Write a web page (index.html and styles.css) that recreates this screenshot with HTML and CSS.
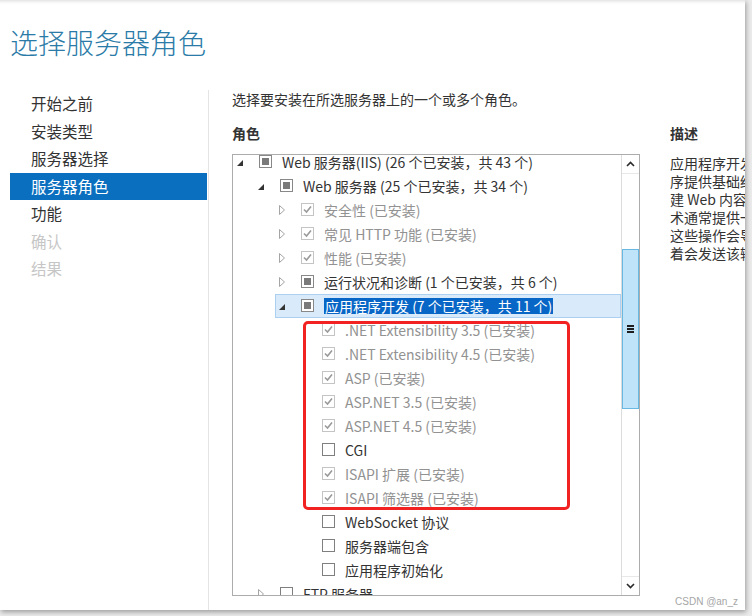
FILE: index.html
```html
<!DOCTYPE html>
<html lang="zh-CN">
<head>
<meta charset="utf-8">
<title>选择服务器角色</title>
<link rel="stylesheet" href="styles.css">
</head>
<body>
<div class="page">
  <h1 class="title">选择服务器角色</h1>
  <div class="body">
    <nav class="nav">
      <div class="nav-item">开始之前</div>
      <div class="nav-item">安装类型</div>
      <div class="nav-item">服务器选择</div>
      <div class="nav-item active">服务器角色</div>
      <div class="nav-item">功能</div>
      <div class="nav-item dis">确认</div>
      <div class="nav-item dis">结果</div>
    </nav>
    <main class="main">
      <p class="intro">选择要安装在所选服务器上的一个或多个角色。</p>
      <div class="cols">
        <section class="roles">
          <h2 class="hdr">角色</h2>
          <div class="tree-box">
            <div class="tree">
              <div class="tree-inner">
                <div class="row l0"><div class="item"><span class="tw"><svg class="exp" width="6" height="6" viewBox="0 0 6 6"><path d="M6 0V6H0Z"/></svg></span><span class="cb ind"></span><span class="lbl">Web 服务器(IIS) (26 个已安装，共 43 个)</span></div></div>
                <div class="row l1"><div class="item"><span class="tw"><svg class="exp" width="6" height="6" viewBox="0 0 6 6"><path d="M6 0V6H0Z"/></svg></span><span class="cb ind"></span><span class="lbl">Web 服务器 (25 个已安装，共 34 个)</span></div></div>
                <div class="row l2"><div class="item"><span class="tw"><svg class="col" width="6" height="10" viewBox="0 0 6 10"><path d="M.5 .5L5.5 5L.5 9.5Z"/></svg></span><span class="cb chk"><svg viewBox="0 0 11 11" width="11" height="11"><path d="M2 5.5L4.5 8L9 2.5"/></svg></span><span class="lbl dis">安全性 (已安装)</span></div></div>
                <div class="row l2"><div class="item"><span class="tw"><svg class="col" width="6" height="10" viewBox="0 0 6 10"><path d="M.5 .5L5.5 5L.5 9.5Z"/></svg></span><span class="cb chk"><svg viewBox="0 0 11 11" width="11" height="11"><path d="M2 5.5L4.5 8L9 2.5"/></svg></span><span class="lbl dis">常见 HTTP 功能 (已安装)</span></div></div>
                <div class="row l2"><div class="item"><span class="tw"><svg class="col" width="6" height="10" viewBox="0 0 6 10"><path d="M.5 .5L5.5 5L.5 9.5Z"/></svg></span><span class="cb chk"><svg viewBox="0 0 11 11" width="11" height="11"><path d="M2 5.5L4.5 8L9 2.5"/></svg></span><span class="lbl dis">性能 (已安装)</span></div></div>
                <div class="row l2"><div class="item"><span class="tw"><svg class="col" width="6" height="10" viewBox="0 0 6 10"><path d="M.5 .5L5.5 5L.5 9.5Z"/></svg></span><span class="cb ind"></span><span class="lbl">运行状况和诊断 (1 个已安装，共 6 个)</span></div></div>
                <div class="row l2"><div class="item hl"><span class="tw"><svg class="exp" width="6" height="6" viewBox="0 0 6 6"><path d="M6 0V6H0Z"/></svg></span><span class="cb ind"></span><span class="lbl"><span class="sel">应用程序开发 (7 个已安装，共 11 个)</span></span></div></div>
                <div class="row l3"><div class="item"><span class="tw"></span><span class="cb chk"><svg viewBox="0 0 11 11" width="11" height="11"><path d="M2 5.5L4.5 8L9 2.5"/></svg></span><span class="lbl dis">.NET Extensibility 3.5 (已安装)</span></div></div>
                <div class="row l3"><div class="item"><span class="tw"></span><span class="cb chk"><svg viewBox="0 0 11 11" width="11" height="11"><path d="M2 5.5L4.5 8L9 2.5"/></svg></span><span class="lbl dis">.NET Extensibility 4.5 (已安装)</span></div></div>
                <div class="row l3"><div class="item"><span class="tw"></span><span class="cb chk"><svg viewBox="0 0 11 11" width="11" height="11"><path d="M2 5.5L4.5 8L9 2.5"/></svg></span><span class="lbl dis">ASP (已安装)</span></div></div>
                <div class="row l3"><div class="item"><span class="tw"></span><span class="cb chk"><svg viewBox="0 0 11 11" width="11" height="11"><path d="M2 5.5L4.5 8L9 2.5"/></svg></span><span class="lbl dis">ASP.NET 3.5 (已安装)</span></div></div>
                <div class="row l3"><div class="item"><span class="tw"></span><span class="cb chk"><svg viewBox="0 0 11 11" width="11" height="11"><path d="M2 5.5L4.5 8L9 2.5"/></svg></span><span class="lbl dis">ASP.NET 4.5 (已安装)</span></div></div>
                <div class="row l3"><div class="item"><span class="tw"></span><span class="cb off"></span><span class="lbl">CGI</span></div></div>
                <div class="row l3"><div class="item"><span class="tw"></span><span class="cb chk"><svg viewBox="0 0 11 11" width="11" height="11"><path d="M2 5.5L4.5 8L9 2.5"/></svg></span><span class="lbl dis">ISAPI 扩展 (已安装)</span></div></div>
                <div class="row l3"><div class="item"><span class="tw"></span><span class="cb chk"><svg viewBox="0 0 11 11" width="11" height="11"><path d="M2 5.5L4.5 8L9 2.5"/></svg></span><span class="lbl dis">ISAPI 筛选器 (已安装)</span></div></div>
                <div class="row l3"><div class="item"><span class="tw"></span><span class="cb off"></span><span class="lbl">WebSocket 协议</span></div></div>
                <div class="row l3"><div class="item"><span class="tw"></span><span class="cb off"></span><span class="lbl">服务器端包含</span></div></div>
                <div class="row l3"><div class="item"><span class="tw"></span><span class="cb off"></span><span class="lbl">应用程序初始化</span></div></div>
                <div class="row l1"><div class="item"><span class="tw"><svg class="col" width="6" height="10" viewBox="0 0 6 10"><path d="M.5 .5L5.5 5L.5 9.5Z"/></svg></span><span class="cb off"></span><span class="lbl">FTP 服务器</span></div></div>
              </div>
            </div>
            <div class="sb">
              <div class="sb-btn up"><svg width="9" height="6" viewBox="0 0 9 6"><path d="M1 5L4.5 1.5L8 5"/></svg></div>
              <div class="sb-track"><div class="sb-thumb"><span class="grip"></span></div></div>
              <div class="sb-btn down"><svg width="9" height="6" viewBox="0 0 9 6"><path d="M1 1L4.5 4.5L8 1"/></svg></div>
            </div>
            <div class="annot"></div>
          </div>
        </section>
        <section class="desc">
          <h2 class="hdr">描述</h2>
          <div class="desc-text">
            <div>应用程序开发为托管 Web 应用程</div>
            <div>序提供基础结构，这些程序可创</div>
            <div>建 Web 内容或扩展 Web 服务器的</div>
            <div>术通常提供一种执行动态操作的</div>
            <div>这些操作会导致 Web 服务器接</div>
            <div>着会发送该输出以响应请求。</div>
          </div>
        </section>
      </div>
    </main>
  </div>
  <div class="watermark">CSDN @an_z</div>
</div>
</body>
</html>
```
FILE: styles.css
```css
* { box-sizing: border-box; }
html, body { margin: 0; padding: 0; }
body {
  width: 752px;
  height: 616px;
  overflow: hidden;
  background: #ebebeb;
  font-family: "Noto Sans CJK SC", "Noto Sans", sans-serif;
  color: #333;
}
.page {
  position: relative;
  width: 745px;
  height: 610px;
  background: linear-gradient(#e4e4e4, #fbfbfb 3px, #fff 5px);
  box-shadow: 1px 2px 5px rgba(0, 0, 0, 0.35);
  overflow: hidden;
}
.title {
  margin: 0;
  padding: 27px 0 0 10px;
  font-size: 28px;
  line-height: 30px;
  font-weight: 300;
  color: #2a7ba7;
}
.body {
  display: flex;
  margin-top: 33px;
  height: 520px;
}
.nav {
  width: 209px;
  flex: none;
  padding-left: 10px;
  border-right: 1px solid #e4e4e4;
}
.nav-item {
  height: 27.5px;
  line-height: 27.5px;
  margin-right: 1px;
  padding-left: 21px;
  font-size: 15.5px;
  white-space: nowrap;
}
.nav-item.active { background: #0b6fc0; color: #fff; }
.nav-item.dis { color: #c6c6c6; }
.main {
  flex: 1;
  min-width: 0;
  padding-left: 23px;
}
.intro {
  margin: 0;
  font-size: 14px;
  line-height: 18px;
  white-space: nowrap;
}
.cols {
  display: flex;
  margin-top: 16px;
}
.roles { width: 408px; flex: none; }
.hdr {
  margin: 0 0 12px;
  font-size: 14px;
  line-height: 18px;
  font-weight: 700;
  color: #333;
}
.desc {
  margin-left: 30px;
  min-width: 0;
  white-space: nowrap;
}
.desc-text { font-size: 14px; line-height: 18px; }

.tree-box {
  position: relative;
  display: flex;
  height: 442px;
  border: 1px solid #acacac;
  overflow: hidden;
  background: #fff;
}
.tree { flex: 1; min-width: 0; overflow: hidden; }
.tree-inner { margin-top: -5.5px; }
.row { height: 24px; }
.l1 { padding-left: 21px; }
.l2 { padding-left: 42px; }
.l3 { padding-left: 63px; }
.item {
  display: flex;
  align-items: center;
  height: 24px;
  padding-left: 3px;
  border: 1px solid transparent;
  white-space: nowrap;
}
.item.hl { background: #d9eafb; border-color: #acd0f2; }
.tw {
  width: 22px;
  flex: none;
  display: flex;
  align-items: center;
}
.tw .exp { fill: #333; margin-top: 2px; }
.tw .col { fill: none; stroke: #a4a4a4; stroke-width: 1; margin-top: 1px; }
.cb {
  position: relative;
  width: 13px;
  height: 13px;
  flex: none;
  margin-right: 10px;
  border: 1px solid #7f7f7f;
  background: #fff;
}
.cb.ind { border-color: #888; }
.cb.ind::after {
  content: "";
  position: absolute;
  left: 2px;
  top: 2px;
  width: 7px;
  height: 7px;
  background: #7a7a7a;
}
.cb.chk { border-color: #c4c4c4; }
.cb.chk svg {
  display: block;
  fill: none;
  stroke: #9a9a9a;
  stroke-width: 1.6;
}
.lbl { font-size: 14px; line-height: 22px; color: #333; }
.lbl.dis { color: #929292; }
.sel {
  display: inline-block;
  line-height: 16px;
  padding: 0 1px;
  background: #0866c6;
  color: #fff;
}

.sb {
  width: 18px;
  flex: none;
  display: flex;
  flex-direction: column;
  border-left: 1px solid #dcdcdc;
}
.sb-btn {
  height: 19px;
  flex: none;
  display: flex;
  align-items: center;
  justify-content: center;
}
.sb-btn svg { fill: none; stroke: #2a2a2a; stroke-width: 1.6; }
.sb-btn.up { border-bottom: 1px solid #e8e8e8; }
.sb-btn.down { border-top: 1px solid #e8e8e8; }
.sb-track { flex: 1; }
.sb-thumb {
  margin-top: 75px;
  height: 160px;
  background: #bfe4fa;
  border: 1px solid #68b8e2;
  display: flex;
  align-items: center;
  justify-content: center;
}
.grip {
  width: 7px;
  height: 8px;
  background: repeating-linear-gradient(#1e1e1e 0 2px, transparent 2px 3px);
}
.annot {
  position: absolute;
  left: 70px;
  top: 166px;
  width: 267px;
  height: 189px;
  border: 3px solid #f22222;
  border-radius: 5px;
}
.watermark {
  position: absolute;
  right: 7px;
  bottom: 2px;
  font-family: "Liberation Sans", Arial, sans-serif;
  font-size: 10px;
  line-height: 12px;
  color: #a6a6a6;
}
```
